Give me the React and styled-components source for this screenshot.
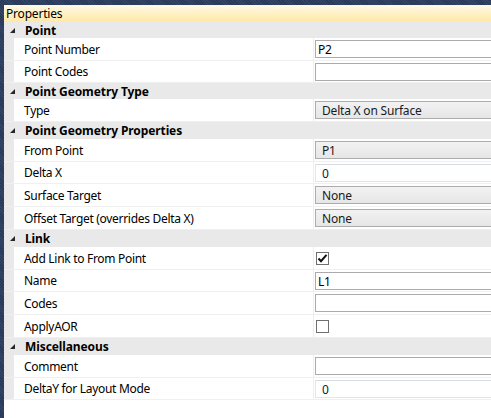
import React from "react";
import styled, { createGlobalStyle, css } from "styled-components";

const GlobalStyle = createGlobalStyle`
  html, body { margin: 0; padding: 0; background: #ffffff; }
  body {
    font-family: "Noto Sans", "Open Sans", "DejaVu Sans", sans-serif;
    font-size: 12px;
    color: #000;
    overflow: hidden;
  }
`;

const navy = css`
  background-color: #2c3b5a;
  background-image: repeating-linear-gradient(
    45deg,
    #2a3857 0px,
    #2a3857 1px,
    #34456a 1px,
    #34456a 2px
  );
`;

const Frame = styled.div`
  width: 491px;
  height: 418px;
  display: flex;
  flex-direction: column;
  overflow: hidden;
`;

const TopBand = styled.div`
  height: 5px;
  flex: none;
  ${navy}
`;

const Body = styled.div`
  flex: 1;
  display: flex;
  min-height: 0;
`;

const LeftStrip = styled.div`
  width: 4px;
  flex: none;
  ${navy}
`;

const Panel = styled.div`
  flex: 1;
  display: flex;
  flex-direction: column;
  background: #fff;
  min-width: 0;
`;

const Header = styled.div`
  height: 17px;
  flex: none;
  display: flex;
  align-items: center;
  padding-left: 2px;
  background: linear-gradient(#fffaea 0%, #fff2c8 45%, #ffe8a6 100%);
  color: #000;
  line-height: 17px;
  letter-spacing: -0.2px;
`;

const CategoryRow = styled.div`
  height: ${(p) => p.$h}px;
  flex: none;
  display: flex;
  align-items: center;
  background: #e9e9e9;
`;

const Expander = styled.span`
  width: 21px;
  flex: none;
  display: flex;
  justify-content: flex-start;
  padding-left: 6px;
  box-sizing: border-box;
`;

const CategoryTitle = styled.span`
  font-weight: 700;
  letter-spacing: -0.1px;
`;

const PropRow = styled.div`
  height: ${(p) => p.$h}px;
  flex: none;
  box-sizing: border-box;
  display: grid;
  grid-template-columns: 10px 299px 1px 1fr;
  border-bottom: 1px solid #f0f0f0;
`;

const Gutter = styled.div`
  background: #e9e9e9;
`;

const NameCell = styled.div`
  display: flex;
  align-items: center;
  padding-left: 10px;
  white-space: nowrap;
  overflow: hidden;
  letter-spacing: -0.3px;
`;

const ColSep = styled.div`
  background: #efefef;
`;

const ValueCell = styled.div`
  padding: 2px 0 0 1px;
  overflow: hidden;
  letter-spacing: -0.2px;
`;

const boxBase = css`
  height: 18px;
  width: 200px;
  box-sizing: border-box;
  display: flex;
  align-items: center;
  white-space: nowrap;
`;

const TextBox = styled.div`
  ${boxBase}
  background: #fff;
  border: 1px solid #ababab;
  padding-left: ${(p) => (p.$numeric ? 6 : 2)}px;
  ${(p) =>
    p.$numeric &&
    css`
      border-color: #e1e6ee;
      border-top-color: #d9dde6;
      color: #0a1b3d;
    `}
`;

const ComboBox = styled.div`
  ${boxBase}
  padding-left: 6px;
  border: 1px solid #acacac;
  background: linear-gradient(#f2f2f2, #e6e6e6);
  color: #1a1a1a;
`;

const CheckBox = styled.div`
  width: 13px;
  height: 13px;
  box-sizing: border-box;
  border: 1px solid #707070;
  background: #fff;
  margin-top: 3px;
  margin-left: 1px;
  display: flex;
  align-items: center;
  justify-content: center;
`;

function Triangle() {
  return (
    <svg width="5" height="5" viewBox="0 0 5 5">
      <polygon points="5,0 5,5 0,5" fill="#262626" />
    </svg>
  );
}

function Check() {
  return (
    <svg width="11" height="11" viewBox="0 0 11 11">
      <path
        d="M1.5 5.5 L4 8.2 L9.5 1.8"
        fill="none"
        stroke="#111"
        strokeWidth="2"
      />
    </svg>
  );
}

const sections = [
  {
    title: "Point",
    h: 16,
    rows: [
      { name: "Point Number", kind: "text", value: "P2", h: 23 },
      { name: "Point Codes", kind: "text", value: "", h: 22 },
    ],
  },
  {
    title: "Point Geometry Type",
    h: 16,
    rows: [{ name: "Type", kind: "combo", value: "Delta X on Surface", h: 23 }],
  },
  {
    title: "Point Geometry Properties",
    h: 17,
    rows: [
      { name: "From Point", kind: "combo", value: "P1", h: 23 },
      { name: "Delta X", kind: "num", value: "0", h: 22 },
      { name: "Surface Target", kind: "combo", value: "None", h: 23 },
      { name: "Offset Target (overrides Delta X)", kind: "combo", value: "None", h: 23 },
    ],
  },
  {
    title: "Link",
    h: 17,
    rows: [
      { name: "Add Link to From Point", kind: "check", value: true, h: 23 },
      { name: "Name", kind: "text", value: "L1", h: 22 },
      { name: "Codes", kind: "text", value: "", h: 23 },
      { name: "ApplyAOR", kind: "check", value: false, h: 23 },
    ],
  },
  {
    title: "Miscellaneous",
    h: 17,
    rows: [
      { name: "Comment", kind: "text", value: "", h: 23 },
      { name: "DeltaY for Layout Mode", kind: "num", value: "0", h: 22 },
    ],
  },
];

function Value({ row }) {
  if (row.kind === "combo") return <ComboBox>{row.value}</ComboBox>;
  if (row.kind === "check")
    return <CheckBox>{row.value ? <Check /> : null}</CheckBox>;
  if (row.kind === "num") return <TextBox $numeric>{row.value}</TextBox>;
  return <TextBox>{row.value}</TextBox>;
}

export default function App() {
  return (
    <>
      <GlobalStyle />
      <Frame>
        <TopBand />
        <Body>
          <LeftStrip />
          <Panel>
            <Header>Properties</Header>
            {sections.map((s) => (
              <React.Fragment key={s.title}>
                <CategoryRow $h={s.h}>
                  <Expander>
                    <Triangle />
                  </Expander>
                  <CategoryTitle>{s.title}</CategoryTitle>
                </CategoryRow>
                {s.rows.map((r) => (
                  <PropRow key={r.name} $h={r.h}>
                    <Gutter />
                    <NameCell>{r.name}</NameCell>
                    <ColSep />
                    <ValueCell>
                      <Value row={r} />
                    </ValueCell>
                  </PropRow>
                ))}
              </React.Fragment>
            ))}
          </Panel>
        </Body>
      </Frame>
    </>
  );
}
